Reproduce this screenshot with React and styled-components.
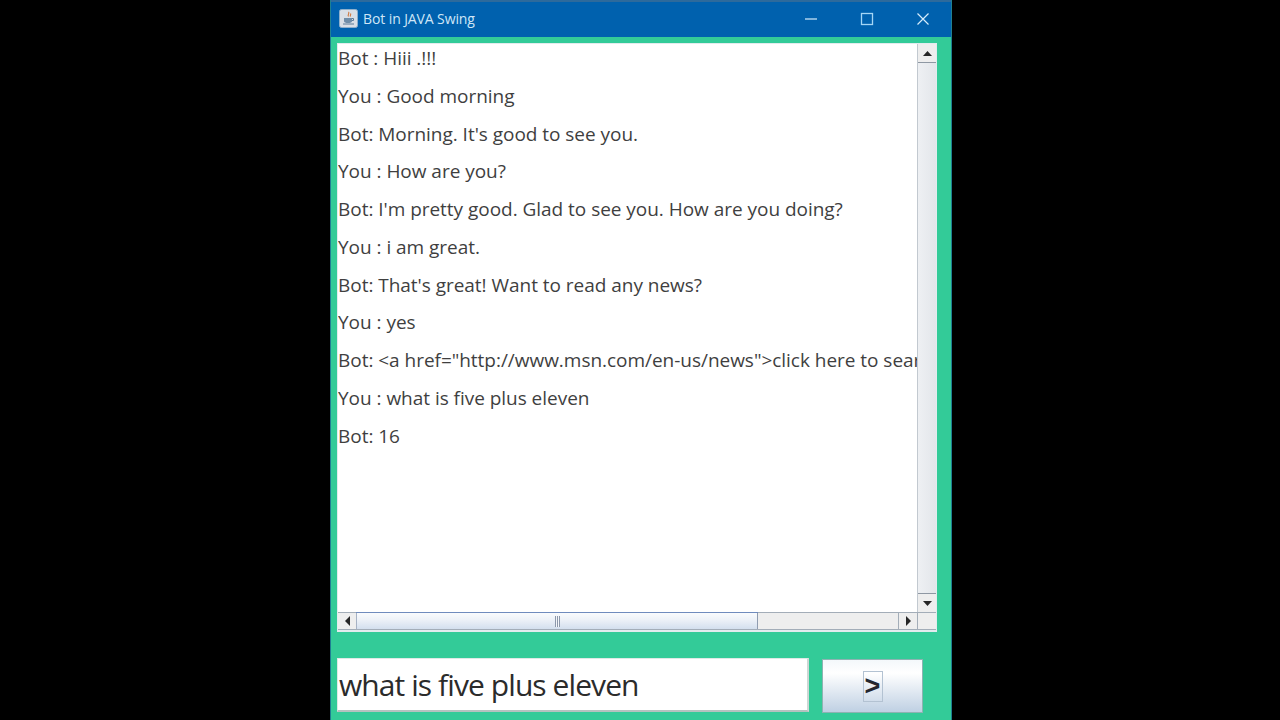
import React from "react";
import styled, { createGlobalStyle } from "styled-components";

const Global = createGlobalStyle`
  html, body { margin: 0; padding: 0; background: #000; overflow: hidden; }
  #root { width: 1280px; height: 720px; }
`;

const Page = styled.div`
  width: 1280px;
  height: 720px;
  background: #000;
  display: flex;
  justify-content: flex-start;
  padding-left: 330px;
  box-sizing: border-box;
  overflow: hidden;
`;

const Win = styled.div`
  width: 622px;
  height: 720px;
  display: flex;
  flex-direction: column;
  background: #33cb98;
  box-sizing: border-box;
  border-left: 1px solid #1f7f92;
  border-right: 1px solid #1f7f92;
`;

const TitleBar = styled.div`
  height: 37px;
  flex: none;
  background: #0061ae;
  border-top: 2px solid #2d6a9c;
  box-sizing: border-box;
  display: flex;
  align-items: center;
  padding: 0 0 2px 8px;
  color: #cfe6f7;
  font: 14px "Open Sans", "Liberation Sans", sans-serif;
  letter-spacing: -0.1px;
`;

const AppIcon = styled.svg`
  width: 19px;
  height: 19px;
  margin-right: 5px;
  flex: none;
`;

const TitleText = styled.span`
  flex: 1;
`;

const WinBtn = styled.div`
  width: 56px;
  height: 33px;
  display: flex;
  align-items: center;
  justify-content: center;
  svg { width: 14px; height: 14px; display: block; }
`;

const Body = styled.div`
  flex: 1;
  display: flex;
  flex-direction: column;
  padding: 6px 14px 0 6px;
  min-height: 0;
`;

const ScrollPane = styled.div`
  width: 600px;
  height: 589px;
  flex: none;
  box-sizing: border-box;
  border: 1px solid #e3ebee;
  border-bottom: 2px solid #e3ebee;
  display: grid;
  grid-template-columns: 1fr 19px;
  grid-template-rows: 1fr 18px;
  background: #fff;
`;

const Viewport = styled.div`
  overflow: hidden;
  background: #fff;
  padding: 0;
  color: #3f3f3f;
  font: 19px "Open Sans", "Noto Sans", sans-serif;
  letter-spacing: -0.03px;
  white-space: nowrap;
`;

const Line = styled.div`
  height: 37.75px;
  line-height: 28px;
`;

const VBar = styled.div`
  background: #eeeeee;
  border-left: 1px solid #c2c9d0;
  display: flex;
  flex-direction: column;
  box-sizing: border-box;
`;

const VThumb = styled.div`
  flex: 1;
  background: linear-gradient(90deg, #eef0f3, #e3e6ea);
  border-top: 1px solid #8f98a3;
  border-bottom: 1px solid #8f98a3;
`;

const ArrowCell = styled.div`
  flex: none;
  height: ${p => p.$h || 18}px;
  width: ${p => (p.$w ? `${p.$w}px` : "auto")};
  display: flex;
  align-items: center;
  justify-content: center;
  box-sizing: border-box;
  background: #eeeeee;
`;

const RightArrowCell = styled(ArrowCell)`
  border-left: 1px solid #a3adb8;
`;

const HBar = styled.div`
  display: flex;
  background: #eeeeee;
  border-top: 1px solid #a3adb8;
  border-bottom: 1px solid #a3adb8;
  box-sizing: border-box;
  align-items: stretch;
`;

const HThumb = styled.div`
  width: 402px;
  flex: none;
  box-sizing: border-box;
  border-left: 1px solid #a6b2c4;
  border-right: 1px solid #8f9cb0;
  background: linear-gradient(180deg, #f9fbfd 0%, #eef2f8 40%, #d3dfee 100%);
  box-shadow: 0 -1px 0 #6f8bbd;
  display: flex;
  align-items: center;
  justify-content: center;
`;

const Grip = styled.div`
  width: 5px;
  height: 11px;
  border-left: 1px solid #8c98ab;
  border-right: 1px solid #8c98ab;
  box-sizing: border-box;
  background: linear-gradient(90deg, #f4f6f9 40%, #8c98ab 40%, #8c98ab 60%, #f4f6f9 60%);
`;

const HTrack = styled.div`
  flex: 1;
`;

const Corner = styled.div`
  background: #eeeeee;
  border-top: 1px solid #a3adb8;
  border-bottom: 1px solid #a3adb8;
  border-left: 1px solid #a3adb8;
`;

const BottomRow = styled.div`
  display: flex;
  align-items: flex-start;
  margin-top: 26px;
`;

const Input = styled.div`
  width: 472px;
  height: 54px;
  flex: none;
  box-sizing: border-box;
  background: #fff;
  border: 1px solid #dfe9e6;
  border-bottom: 2px solid #b4c2bf;
  border-right: 2px solid #ccd7d4;
  padding-left: 1px;
  color: #2b2b2b;
  font: 30px/51px "Open Sans", "Noto Sans", sans-serif;
  letter-spacing: -0.92px;
  white-space: nowrap;
`;

const SendBtn = styled.div`
  width: 101px;
  height: 54px;
  flex: none;
  margin: 1px 0 0 13px;
  box-sizing: border-box;
  border: 1px solid #8db3b2;
  background: linear-gradient(180deg, #f4f8fb 0%, #ffffff 25%, #bfd0e3 100%);
  display: flex;
  align-items: center;
  justify-content: center;
`;

const SendLabel = styled.div`
  width: 20px;
  height: 31px;
  box-sizing: border-box;
  border: 1px solid #b3c2d2;
  display: flex;
  align-items: center;
  justify-content: center;
  color: #23262f;
  font: bold 27px/28px "Liberation Sans", sans-serif;
`;

const Tri = ({ d }) => {
  const pts = {
    up: "0,5 4.5,0 9,5",
    down: "0,0 9,0 4.5,5",
    left: "5,0 5,10 0,5",
    right: "0,0 5,5 0,10",
  }[d];
  const vert = d === "up" || d === "down";
  return (
    <svg width={vert ? 9 : 5} height={vert ? 5 : 10} viewBox={vert ? "0 0 9 5" : "0 0 5 10"}>
      <polygon points={pts} fill="#262626" />
    </svg>
  );
};

const lines = [
  "Bot : Hiii .!!!",
  "You : Good morning",
  "Bot: Morning. It's good to see you.",
  "You : How are you?",
  "Bot: I'm pretty good. Glad to see you. How are you doing?",
  "You : i am great.",
  "Bot: That's great! Want to read any news?",
  "You : yes",
  'Bot: <a href="http://www.msn.com/en-us/news">click here to sear',
  "You : what is five plus eleven",
  "Bot: 16",
];

export default function App() {
  return (
    <Page>
      <Global />
      <Win>
        <TitleBar>
          <AppIcon viewBox="0 0 19 19">
            <rect x="0.5" y="0.5" width="18" height="18" rx="2" fill="#d9dfe6" stroke="#8fb0cc" />
            <path d="M9.5 3c1.5 1.5-1.5 2.5 0 4.5M11.5 4.5c1 1-1 2 0 3" stroke="#d0763a" strokeWidth="1.1" fill="none" />
            <path d="M5 9h8v3c0 1.5-1.5 2-4 2s-4-.5-4-2z" fill="#6f8da8" />
            <path d="M13 9.5h1.5v2H13M4 15h11" stroke="#5a7a98" strokeWidth="1" fill="none" />
          </AppIcon>
          <TitleText>Bot in JAVA Swing</TitleText>
          <WinBtn>
            <svg viewBox="0 0 14 14"><path d="M1 7h12" stroke="#d5ecfb" strokeWidth="1.2" /></svg>
          </WinBtn>
          <WinBtn>
            <svg viewBox="0 0 14 14"><rect x="1.5" y="1.5" width="11" height="11" fill="none" stroke="#a5d6f5" strokeWidth="1.3" /></svg>
          </WinBtn>
          <WinBtn>
            <svg viewBox="0 0 14 14"><path d="M1.5 1.5l11 11M12.5 1.5l-11 11" stroke="#d5ecfb" strokeWidth="1.2" /></svg>
          </WinBtn>
        </TitleBar>
        <Body>
          <ScrollPane>
            <Viewport>
              {lines.map((l, i) => (
                <Line key={i}>{l}</Line>
              ))}
            </Viewport>
            <VBar>
              <ArrowCell $h={18}><Tri d="up" /></ArrowCell>
              <VThumb />
              <ArrowCell $h={18}><Tri d="down" /></ArrowCell>
            </VBar>
            <HBar>
              <ArrowCell $w={18} $h={16}><Tri d="left" /></ArrowCell>
              <HThumb><Grip /></HThumb>
              <HTrack />
              <RightArrowCell $w={19} $h={16}><Tri d="right" /></RightArrowCell>
            </HBar>
            <Corner />
          </ScrollPane>
          <BottomRow>
            <Input>what is five plus eleven</Input>
            <SendBtn><SendLabel>&gt;</SendLabel></SendBtn>
          </BottomRow>
        </Body>
      </Win>
    </Page>
  );
}
